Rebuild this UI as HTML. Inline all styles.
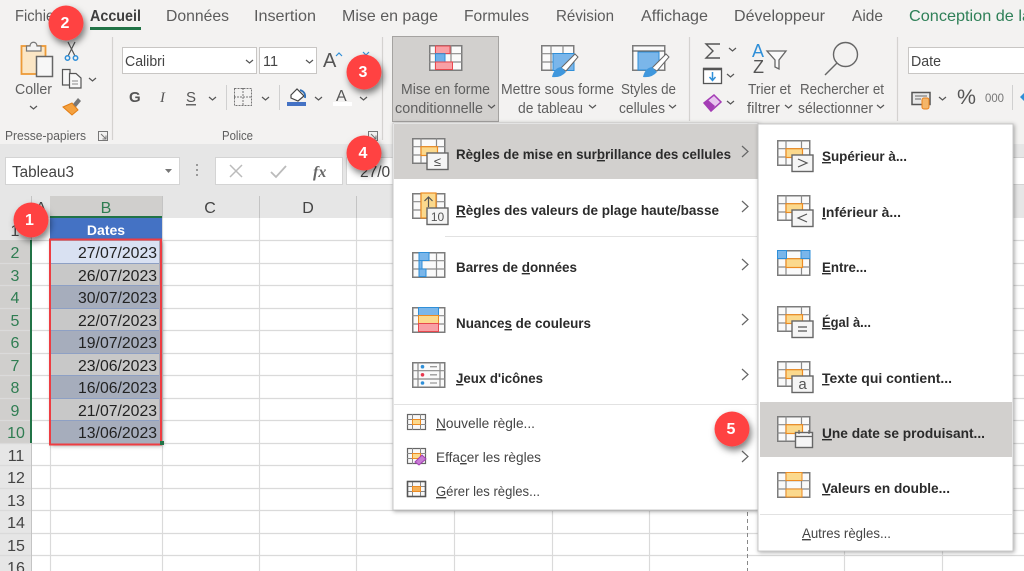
<!DOCTYPE html>
<html lang="fr">
<head>
<meta charset="utf-8">
<title>Excel</title>
<style>
html,body{margin:0;padding:0;background:#fff;width:1024px;height:571px;overflow:hidden}
svg{display:block;position:absolute;left:0;top:0;filter:blur(.3px)}
text{font-family:"Liberation Sans",sans-serif;white-space:pre}
.tab{font-size:16px;fill:#5c5c5c}
.rb{font-size:14.5px;fill:#5f5f5f}
.lb{font-size:13px;fill:#5f5f5f}
.hd{font-size:16px;fill:#444;text-anchor:middle}
.num{font-size:16px;fill:#444;text-anchor:middle}
.sel{fill:#2f7d52}
.dt{font-size:16px;fill:#222}
.m{font-size:14px;font-weight:bold;fill:#2b2b2b}
.r{font-size:14px;fill:#444}
.u{text-decoration:underline}
.c{font-size:16px;font-weight:bold;fill:#fff;text-anchor:middle}
.chev{fill:none;stroke:#555;stroke-width:1.2}
.arr{fill:none;stroke:#666;stroke-width:1.2}
.gl{stroke:#dadada;stroke-width:1.2}
</style>
</head>
<body>
<svg width="1024" height="571" viewBox="0 0 1024 571" xmlns="http://www.w3.org/2000/svg">
<defs>
<filter id="sh" x="-10%" y="-10%" width="120%" height="120%"><feDropShadow dx="1" dy="1" stdDeviation="2" flood-color="#000" flood-opacity=".35"/></filter>
<filter id="cs" x="-40%" y="-40%" width="180%" height="180%"><feDropShadow dx="2" dy="4" stdDeviation="3.500" flood-color="#000" flood-opacity=".5"/></filter>
<g id="grid">
<rect x="0.750" y="0.750" width="32" height="24.500" fill="#fafafa" stroke="#7c7c7c" stroke-width="1.500"/>
<path d="M0 8.700H33M0 17H33M9 0V25M24.500 0V25" stroke="#8a8a8a" stroke-width="1.200" fill="none"/>
</g>
<g id="gridO">
<use href="#grid"/>
<rect x="9" y="8.700" width="16.500" height="8.800" fill="#fbd98d" stroke="#ed8b22" stroke-width="1.200"/>
</g>
<g id="ov"><rect x="15" y="15" width="21" height="16.500" fill="#f5f5f5" stroke="#666" stroke-width="1.400"/></g>
<path id="ch" class="chev" d="M0 0L3.500 3L7 0"/>
<path id="ar" class="arr" d="M0 0L6 5.500L0 11"/>
<g id="small">
<rect x="0.500" y="0.500" width="18" height="15" fill="#f8f8f8" stroke="#666" stroke-width="1.200"/>
<path d="M0 5.500H19M0 10.500H19M5.500 0V16M13.500 0V16" stroke="#888" fill="none"/>
</g>
</defs>

<!-- base -->
<rect width="1024" height="571" fill="#fff"/>
<rect width="1024" height="145" fill="#f3f2f1"/>
<rect y="144" width="1024" height="52" fill="#e6e6e6"/>

<!-- tabs -->
<text class="tab" x="15" y="21" textLength="44" lengthAdjust="spacingAndGlyphs">Fichier</text>
<text class="tab" x="90" y="21" textLength="51" lengthAdjust="spacingAndGlyphs" style="font-weight:bold;fill:#3f3f3f">Accueil</text>
<rect x="90" y="27" width="51" height="3" fill="#217346"/>
<text class="tab" x="166" y="21" textLength="63" lengthAdjust="spacingAndGlyphs">Données</text>
<text class="tab" x="254" y="21" textLength="62" lengthAdjust="spacingAndGlyphs">Insertion</text>
<text class="tab" x="342" y="21" textLength="96" lengthAdjust="spacingAndGlyphs">Mise en page</text>
<text class="tab" x="464" y="21" textLength="65" lengthAdjust="spacingAndGlyphs">Formules</text>
<text class="tab" x="556" y="21" textLength="58" lengthAdjust="spacingAndGlyphs">Révision</text>
<text class="tab" x="641" y="21" textLength="67" lengthAdjust="spacingAndGlyphs">Affichage</text>
<text class="tab" x="734" y="21" textLength="91" lengthAdjust="spacingAndGlyphs">Développeur</text>
<text class="tab" x="852" y="21" textLength="31" lengthAdjust="spacingAndGlyphs">Aide</text>
<text class="tab" x="909" y="21" textLength="122" lengthAdjust="spacingAndGlyphs" style="fill:#2f8058">Conception de la</text>

<!-- ribbon separators -->
<path d="M112.500 37V140M382.500 37V140M689.500 37V121M897.500 37V121" stroke="#d4d2d0" stroke-width="1.200"/>

<!-- clipboard group -->
<rect x="21.500" y="46" width="24" height="28" fill="#fbe6c5" stroke="#ed9a37" stroke-width="1.800"/>
<path d="M26.500 51V46H30C30 41 37 41 37 46H41V51Z" fill="#f3f3f3" stroke="#777" stroke-width="1.200"/>
<rect x="36.500" y="56.500" width="16" height="20" fill="#f7f7f7" stroke="#666" stroke-width="1.500"/>
<text class="rb" x="15" y="94" textLength="37" lengthAdjust="spacingAndGlyphs">Coller</text>
<use href="#ch" x="30" y="106"/>
<path d="M68 42L75 56M75 42L68 56" stroke="#555" stroke-width="1.200"/>
<circle cx="67.500" cy="58" r="2.200" fill="none" stroke="#2f8fd8" stroke-width="1.500"/>
<circle cx="75.500" cy="58" r="2.200" fill="none" stroke="#2f8fd8" stroke-width="1.500"/>
<path d="M62.500 69.500H70V85H62.500Z" fill="#f7f7f7" stroke="#555" stroke-width="1.200"/>
<path d="M69.500 73.500H76L81 78V88H69.500Z" fill="#f7f7f7" stroke="#555" stroke-width="1.200"/>
<path d="M72 81H78M72 84H78" stroke="#888"/>
<use href="#ch" x="89" y="78"/>
<path d="M63 107L72 103L78 110L72 115Z" fill="#f4a13f" stroke="#e27d14"/>
<path d="M73 104L78 98L81 101L76 107Z" fill="#777"/>

<!-- font group -->
<rect x="122.500" y="47.500" width="134" height="26" fill="#fff" stroke="#c8c6c4"/>
<text class="rb" x="125" y="66" textLength="40" lengthAdjust="spacingAndGlyphs" style="fill:#444">Calibri</text>
<use href="#ch" x="246" y="60"/>
<rect x="259.500" y="47.500" width="57" height="26" fill="#fff" stroke="#c8c6c4"/>
<text class="rb" x="263" y="66" style="fill:#444">11</text>
<use href="#ch" x="306" y="60"/>
<text x="323" y="67" style="font-size:20px;fill:#555">A</text>
<path d="M336 56L339 53L342 56" fill="none" stroke="#2f8fd8" stroke-width="1.200"/>
<path d="M363 52L366 55L369 52" fill="none" stroke="#2f8fd8" stroke-width="1.200"/>
<text x="129" y="102" style="font-size:15px;font-weight:bold;fill:#555">G</text>
<text x="160" y="102" style="font-size:15px;font-style:italic;fill:#555;font-family:'Liberation Serif',serif">I</text>
<text x="186" y="102" style="font-size:15px;fill:#555">S</text>
<rect x="186" y="104" width="10" height="1.500" fill="#666"/>
<use href="#ch" x="209" y="97"/>
<path d="M226.500 85V110M279.500 85V110" stroke="#d0d0d0"/>
<rect x="234.500" y="88.500" width="17" height="17" fill="none" stroke="#777" stroke-dasharray="2 1"/>
<path d="M243 88V106M234 97H252" stroke="#777" stroke-dasharray="2 1"/>
<use href="#ch" x="262" y="97"/>
<path d="M291 95L297 89L304 96L298 101L291 98Z" fill="#fff" stroke="#444" stroke-width="1.200"/>
<path d="M300 90Q306 92 305 98" fill="none" stroke="#2f6fb8" stroke-width="1.800"/>
<rect x="287" y="102" width="19" height="4" fill="#4472c4"/>
<use href="#ch" x="315" y="97"/>
<text x="336" y="101" style="font-size:16px;fill:#555">A</text>
<rect x="333" y="102" width="19" height="4" fill="#fff"/>
<use href="#ch" x="360" y="97"/>
<text class="lb" x="5" y="140" textLength="81" lengthAdjust="spacingAndGlyphs">Presse-papiers</text>
<text class="lb" x="222" y="140" textLength="31" lengthAdjust="spacingAndGlyphs">Police</text>
<path d="M98.500 131.500H107.500V140.500H98.500ZM101 134L106 139M106 135.500V139H102.500" fill="none" stroke="#777"/>
<path d="M368.500 131.500H377.500V140.500H368.500ZM371 134L376 139M376 135.500V139H372.500" fill="none" stroke="#777"/>

<!-- CF button -->
<rect x="392.500" y="36.500" width="106" height="85" fill="#d2d0ce" stroke="#a5a3a1"/>
<g transform="translate(429 45)">
<rect x="0.750" y="0.750" width="32" height="24.500" fill="#fafafa" stroke="#7c7c7c" stroke-width="1.500"/>
<path d="M0 8.700H33M0 17H33M6.500 0V25M22 0V25" stroke="#8a8a8a" stroke-width="1.200"/>
<rect x="6.500" y="1" width="14.500" height="7.500" fill="#f8a0a5" stroke="#e8484f"/>
<rect x="6.500" y="8.700" width="9.500" height="8.300" fill="#70b0e8" stroke="#2f8fd8"/>
<rect x="6.500" y="17" width="17" height="7.500" fill="#f8a0a5" stroke="#e8484f"/>
</g>
<text class="rb" x="401" y="94" textLength="89" lengthAdjust="spacingAndGlyphs">Mise en forme</text>
<text class="rb" x="395" y="113" textLength="88" lengthAdjust="spacingAndGlyphs">conditionnelle</text>
<use href="#ch" x="488" y="105"/>

<!-- table format -->
<g transform="translate(541 45)">
<rect x="0.750" y="0.750" width="32" height="24.500" fill="#fafafa" stroke="#7c7c7c" stroke-width="1.500"/>
<path d="M0 8.700H33M0 17H33M10 0V25M22 0V25" stroke="#8a8a8a" stroke-width="1.200"/>
<rect x="12" y="8.500" width="21" height="17" fill="#7ab6ea" stroke="#2f8fd8"/>
</g>
<path d="M561 68L575 54L578 57L566 71Z" fill="#fff" stroke="#666"/>
<path d="M552 77Q554 68 561 67L566 72Q561 78 552 77Z" fill="#3f97dd"/>
<text class="rb" x="501" y="94" textLength="113" lengthAdjust="spacingAndGlyphs">Mettre sous forme</text>
<text class="rb" x="518" y="113" textLength="65" lengthAdjust="spacingAndGlyphs">de tableau</text>
<use href="#ch" x="589" y="105"/>

<!-- cell styles -->
<g transform="translate(632 45)">
<rect x="0.750" y="0.750" width="32" height="24.500" fill="#fafafa" stroke="#7c7c7c" stroke-width="1.500"/>
<rect x="6" y="7" width="21" height="18" fill="#7ab6ea" stroke="#2f8fd8"/>
<path d="M0 6H33" stroke="#666" stroke-width="1.200"/>
</g>
<path d="M652 68L666 54L669 57L657 71Z" fill="#fff" stroke="#666"/>
<path d="M643 77Q645 68 652 67L657 72Q652 78 643 77Z" fill="#3f97dd"/>
<text class="rb" x="621" y="94" textLength="55" lengthAdjust="spacingAndGlyphs">Styles de</text>
<text class="rb" x="619" y="113" textLength="46" lengthAdjust="spacingAndGlyphs">cellules</text>
<use href="#ch" x="669" y="105"/>

<!-- editing -->
<path d="M720 44H706L713 51L706 58H720" fill="none" stroke="#555" stroke-width="1.400"/>
<use href="#ch" x="729" y="48"/>
<rect x="703.500" y="68.500" width="18" height="15" fill="#fff" stroke="#555" stroke-width="1.300"/>
<path d="M703 69H722" stroke="#555" stroke-width="2.500"/>
<path d="M712.500 72V80M709.500 77L712.500 80.500L715.500 77" fill="none" stroke="#2f8fd8" stroke-width="1.500"/>
<use href="#ch" x="727" y="74"/>
<path d="M704 103L714 95L721 102L711 111Z" fill="#e8c6ef" stroke="#a43db5" stroke-width="1.500"/>
<path d="M704 103L708 100L715 106L711 111Z" fill="#a43db5"/>
<use href="#ch" x="727" y="101"/>
<text x="752" y="57" style="font-size:18px;fill:#2f8fd8">A</text>
<text x="753" y="73" style="font-size:18px;fill:#555">Z</text>
<path d="M767 51H786L779 60V69L775 67V60Z" fill="#fafafa" stroke="#666" stroke-width="1.300"/>
<text class="rb" x="748" y="94" textLength="43" lengthAdjust="spacingAndGlyphs">Trier et</text>
<text class="rb" x="747" y="113" textLength="33" lengthAdjust="spacingAndGlyphs">filtrer</text>
<use href="#ch" x="785" y="105"/>
<circle cx="845.500" cy="54.500" r="12" fill="none" stroke="#666" stroke-width="1.400"/>
<path d="M837 63L825 75" stroke="#666" stroke-width="1.400"/>
<text class="rb" x="800" y="94" textLength="84" lengthAdjust="spacingAndGlyphs">Rechercher et</text>
<text class="rb" x="798" y="113" textLength="75" lengthAdjust="spacingAndGlyphs">sélectionner</text>
<use href="#ch" x="877" y="105"/>

<!-- number -->
<rect x="908.500" y="47.500" width="120" height="26" fill="#fff" stroke="#c8c6c4"/>
<text class="rb" x="911" y="66" textLength="30" lengthAdjust="spacingAndGlyphs" style="fill:#444">Date</text>
<rect x="912" y="92.500" width="18" height="12" fill="#e8e8e8" stroke="#555" stroke-width="1.500"/>
<path d="M915 96H927M915 99H921" stroke="#666"/>
<rect x="922" y="98" width="7" height="11" rx="2" fill="#f4b66a" stroke="#e8801a"/>
<use href="#ch" x="939" y="97"/>
<text x="957" y="104" style="font-size:21px;fill:#555" textLength="19" lengthAdjust="spacingAndGlyphs">%</text>
<text x="985" y="102" style="font-size:12px;fill:#777" textLength="19" lengthAdjust="spacingAndGlyphs">000</text>
<path d="M1012.500 85V110" stroke="#d0d0d0"/>
<path d="M1020 97L1024 93V101Z" fill="#2f8fd8"/>

<!-- formula bar -->
<rect x="5.500" y="157.500" width="174" height="27" fill="#fff" stroke="#d4d4d4"/>
<text x="12" y="177" style="font-size:15.500px;fill:#444" textLength="62" lengthAdjust="spacingAndGlyphs">Tableau3</text>
<path d="M165 169H172L168.500 173Z" fill="#777"/>
<path d="M197 164V166M197 169V171M197 174V176" stroke="#999" stroke-width="2"/>
<rect x="215.500" y="157.500" width="127" height="27" fill="#fff" stroke="#d4d4d4"/>
<path d="M230 165L242 177M242 165L230 177" stroke="#bbb" stroke-width="1.500"/>
<path d="M271 172L276 177L286 166" fill="none" stroke="#bbb" stroke-width="1.800"/>
<text x="313" y="177" style="font-size:16px;font-style:italic;font-weight:bold;fill:#666;font-family:'Liberation Serif',serif">fx</text>
<rect x="346.500" y="157.500" width="700" height="27" fill="#fff" stroke="#d4d4d4"/>
<text x="360" y="177" style="font-size:15.500px;fill:#444">27/0</text>

<!-- column header -->
<rect y="196" width="1024" height="22" fill="#e6e6e6"/>
<rect x="50" y="196" width="112" height="22" fill="#d0cfcd"/>
<rect x="50" y="216" width="112" height="2" fill="#217346"/>
<path d="M31.500 196V218M162.500 196V218M259.500 196V218M356.500 196V218" stroke="#c4c4c4"/>
<text class="hd" x="106" y="213" style="fill:#2f7d52">B</text>
<text class="hd" x="210" y="213">C</text>
<text class="hd" x="308" y="213">D</text>
<text class="hd" x="41" y="213">A</text>

<!-- row header -->
<rect y="218" width="31" height="353" fill="#e6e6e6"/>
<rect y="240" width="31" height="203" fill="#d0cfcd"/>
<g class="gl">
<path d="M31 240.500H1024M0 263.500H1024M0 285.500H1024M0 308.500H1024M0 330.500H1024M0 353.500H1024M0 375.500H1024M0 398.500H1024M0 420.500H1024M0 443.500H1024M0 465.500H1024M0 488.500H1024M0 510.500H1024M0 533.500H1024M0 555.500H1024"/>
<path d="M50.500 218V571M162.500 218V571M259.500 218V571M356.500 218V571M454.500 218V571M552.500 218V571M649.500 218V571M844.500 218V571M942.500 218V571M1039.500 218V571"/>
</g>
<path d="M747.500 218V571" stroke="#888" stroke-dasharray="4 3"/>
<path d="M31.500 218V571" stroke="#c4c4c4"/>
<text class="num" x="15" y="236">1</text>
<text class="num sel" x="15" y="258">2</text>
<text class="num sel" x="15" y="281">3</text>
<text class="num sel" x="15" y="303">4</text>
<text class="num sel" x="15" y="326">5</text>
<text class="num sel" x="15" y="348">6</text>
<text class="num sel" x="15" y="371">7</text>
<text class="num sel" x="15" y="393">8</text>
<text class="num sel" x="15" y="416">9</text>
<text class="num sel" x="16" y="438">10</text>
<text class="num" x="16" y="461">11</text>
<text class="num" x="16" y="483">12</text>
<text class="num" x="16" y="506">13</text>
<text class="num" x="16" y="528">14</text>
<text class="num" x="16" y="551">15</text>
<text class="num" x="16" y="573">16</text>
<rect x="30" y="240" width="2" height="203" fill="#217346"/>

<!-- data -->
<rect x="50" y="218" width="112" height="22" fill="#4472c4"/>
<text x="106" y="235" text-anchor="middle" style="font-size:14px;font-weight:bold;fill:#fff">Dates</text>
<rect x="50" y="240" width="112" height="205" fill="#a6adbc" filter="url(#sh)"/>
<rect x="51" y="241" width="108" height="22" fill="#d9e1f2"/>
<rect x="51" y="264" width="108" height="21" fill="#c8c8c8"/>
<rect x="51" y="286" width="108" height="22" fill="#a6adbc"/>
<rect x="51" y="309" width="108" height="21" fill="#c8c8c8"/>
<rect x="51" y="331" width="108" height="22" fill="#a6adbc"/>
<rect x="51" y="354" width="108" height="21" fill="#c8c8c8"/>
<rect x="51" y="376" width="108" height="22" fill="#a6adbc"/>
<rect x="51" y="399" width="108" height="21" fill="#c8c8c8"/>
<rect x="51" y="421" width="108" height="22" fill="#a6adbc"/>
<path d="M51 263.500H159M51 285.500H159M51 308.500H159M51 330.500H159M51 353.500H159M51 375.500H159M51 398.500H159M51 420.500H159" stroke="#8ea0c4"/>
<text class="dt" x="78" y="258" textLength="79" lengthAdjust="spacingAndGlyphs">27/07/2023</text>
<text class="dt" x="78" y="281" textLength="79" lengthAdjust="spacingAndGlyphs">26/07/2023</text>
<text class="dt" x="78" y="303" textLength="79" lengthAdjust="spacingAndGlyphs">30/07/2023</text>
<text class="dt" x="78" y="326" textLength="79" lengthAdjust="spacingAndGlyphs">22/07/2023</text>
<text class="dt" x="78" y="348" textLength="79" lengthAdjust="spacingAndGlyphs">19/07/2023</text>
<text class="dt" x="78" y="371" textLength="79" lengthAdjust="spacingAndGlyphs">23/06/2023</text>
<text class="dt" x="78" y="393" textLength="79" lengthAdjust="spacingAndGlyphs">16/06/2023</text>
<text class="dt" x="78" y="416" textLength="79" lengthAdjust="spacingAndGlyphs">21/07/2023</text>
<text class="dt" x="78" y="438" textLength="79" lengthAdjust="spacingAndGlyphs">13/06/2023</text>
<rect x="50" y="239.500" width="111" height="205" fill="none" stroke="#ee3d42" stroke-width="2"/>
<rect x="160" y="441" width="4" height="4" fill="#217346"/>

<!-- main menu -->
<rect x="393" y="123" width="365" height="387" fill="#fff" stroke="#c8c8c8" filter="url(#sh)"/>
<rect x="394" y="124" width="364" height="55" fill="#d2d0ce"/>
<path d="M445 236.500H757M394 404.500H757" stroke="#e2e2e2"/>

<g transform="translate(412 138)"><use href="#gridO"/><use href="#ov"/><text x="25.500" y="28" text-anchor="middle" style="font-size:13px;fill:#444">≤</text></g>
<text class="m" x="456" y="159" textLength="275" lengthAdjust="spacingAndGlyphs">Règles de mise en sur<tspan class="u">b</tspan>rillance des cellules</text>
<use href="#ar" x="742" y="146"/>

<g transform="translate(412 193)">
<rect x="0.750" y="0.750" width="32" height="24.500" fill="#fafafa" stroke="#7c7c7c" stroke-width="1.500"/>
<path d="M0 8.700H33M0 17H33M9 0V25M24.500 0V25" stroke="#8a8a8a" stroke-width="1.200"/>
<rect x="9" y="0" width="15" height="25" fill="#fbd98d" stroke="#ed8b22" stroke-width="1.200"/>
<path d="M16.500 14V4M12.500 8L16.500 4L20.500 8" fill="none" stroke="#555" stroke-width="1.200"/>
<use href="#ov"/><text x="25.500" y="28" text-anchor="middle" style="font-size:12px;fill:#555">10</text></g>
<text class="m" x="456" y="215" textLength="263" lengthAdjust="spacingAndGlyphs"><tspan class="u">R</tspan>ègles des valeurs de plage haute/basse</text>
<use href="#ar" x="742" y="201"/>

<g transform="translate(412 252)"><use href="#grid"/>
<rect x="7" y="0.500" width="10" height="8" fill="#7ab6ea" stroke="#2f8fd8"/>
<rect x="7" y="8.500" width="3" height="8.500" fill="#7ab6ea" stroke="#2f8fd8"/>
<rect x="7" y="17" width="7" height="7.500" fill="#7ab6ea" stroke="#2f8fd8"/></g>
<text class="m" x="456" y="272" textLength="121" lengthAdjust="spacingAndGlyphs">Barres de <tspan class="u">d</tspan>onnées</text>
<use href="#ar" x="742" y="259"/>

<g transform="translate(412 307)"><use href="#grid"/>
<rect x="6.500" y="0.500" width="20" height="8" fill="#7ab6ea" stroke="#2f8fd8"/>
<rect x="6.500" y="8.500" width="20" height="8" fill="#fbd98d" stroke="#ed8b22"/>
<rect x="6.500" y="16.500" width="20" height="8" fill="#f8a0a5" stroke="#e8484f"/></g>
<text class="m" x="456" y="328" textLength="135" lengthAdjust="spacingAndGlyphs">Nuance<tspan class="u">s</tspan> de couleurs</text>
<use href="#ar" x="742" y="314"/>

<g transform="translate(412 362)">
<rect x="0.750" y="0.750" width="32" height="24.500" fill="#fafafa" stroke="#7c7c7c" stroke-width="1.500"/>
<path d="M0 8.700H33M0 17H33M6 0V25M28 0V25" stroke="#8a8a8a" stroke-width="1.200"/>
<circle cx="10.500" cy="4.700" r="1.800" fill="#2f8fd8"/><circle cx="10.500" cy="12.800" r="1.800" fill="#e8384f"/><circle cx="10.500" cy="21" r="1.800" fill="#2f8fd8"/>
<path d="M18 4.700H25M18 12.800H25M18 21H25" stroke="#999" stroke-width="1.300"/></g>
<text class="m" x="456" y="383" textLength="87" lengthAdjust="spacingAndGlyphs"><tspan class="u">J</tspan>eux d'icônes</text>
<use href="#ar" x="742" y="369"/>

<g transform="translate(407 414)"><use href="#small"/><rect x="5.500" y="5.500" width="8" height="5" fill="#fbd98d" stroke="#ed8b22"/></g>
<text class="r" x="436" y="428" textLength="99" lengthAdjust="spacingAndGlyphs"><tspan class="u">N</tspan>ouvelle règle...</text>
<g transform="translate(407 448)"><use href="#small"/><rect x="5.500" y="5.500" width="8" height="5" fill="#fbd98d" stroke="#ed8b22"/><path d="M8 14L15 7L19 11L12 17Z" fill="#c77dd3" stroke="#a43db5"/></g>
<text class="r" x="436" y="462" textLength="105" lengthAdjust="spacingAndGlyphs">Effa<tspan class="u">c</tspan>er les règles</text>
<use href="#ar" x="742" y="451"/>
<g transform="translate(407 481)"><use href="#small"/><rect x="0.500" y="0.500" width="18" height="15" fill="none" stroke="#555" stroke-width="1.500"/><rect x="5.500" y="5.500" width="8" height="5" fill="#f5b057" stroke="#ed8b22"/></g>
<text class="r" x="436" y="496" textLength="104" lengthAdjust="spacingAndGlyphs"><tspan class="u">G</tspan>érer les règles...</text>

<!-- submenu -->
<rect x="758" y="124" width="255" height="427" fill="#fff" stroke="#c8c8c8" filter="url(#sh)"/>
<rect x="760" y="402" width="252" height="55" fill="#d2d0ce"/>
<path d="M760 514.500H1012" stroke="#e2e2e2"/>

<g transform="translate(777 140)"><use href="#gridO"/><use href="#ov"/><path d="M21 19L30 23L21 27" fill="none" stroke="#555" stroke-width="1.200"/></g>
<text class="m" x="822" y="161" textLength="85" lengthAdjust="spacingAndGlyphs"><tspan class="u">S</tspan>upérieur à...</text>
<g transform="translate(777 195)"><use href="#gridO"/><use href="#ov"/><path d="M30 19L21 23L30 27" fill="none" stroke="#555" stroke-width="1.200"/></g>
<text class="m" x="822" y="217" textLength="79" lengthAdjust="spacingAndGlyphs"><tspan class="u">I</tspan>nférieur à...</text>
<g transform="translate(777 250)"><use href="#gridO"/><rect x="0.500" y="0.500" width="9" height="8" fill="#7ab6ea" stroke="#2f8fd8"/><rect x="24" y="0.500" width="9" height="8" fill="#7ab6ea" stroke="#2f8fd8"/></g>
<text class="m" x="822" y="272" textLength="45" lengthAdjust="spacingAndGlyphs"><tspan class="u">E</tspan>ntre...</text>
<g transform="translate(777 306)"><use href="#gridO"/><use href="#ov"/><path d="M21 21H30M21 25H30" stroke="#555" stroke-width="1.200"/></g>
<text class="m" x="822" y="327" textLength="49" lengthAdjust="spacingAndGlyphs"><tspan class="u">É</tspan>gal à...</text>
<g transform="translate(777 361)"><use href="#gridO"/><use href="#ov"/><text x="25.500" y="28" text-anchor="middle" style="font-size:15px;fill:#555">a</text></g>
<text class="m" x="822" y="383" textLength="130" lengthAdjust="spacingAndGlyphs"><tspan class="u">T</tspan>exte qui contient...</text>
<g transform="translate(777 416)"><use href="#gridO"/><rect x="18.500" y="16.500" width="17" height="15" fill="#f5f5f5" stroke="#666" stroke-width="1.400"/><path d="M18 20.500H36M22 14V18M32 14V18" stroke="#666" stroke-width="1.200"/></g>
<text class="m" x="822" y="438" textLength="163" lengthAdjust="spacingAndGlyphs"><tspan class="u">U</tspan>ne date se produisant...</text>
<g transform="translate(777 472)"><use href="#grid"/><rect x="9" y="0.500" width="16" height="8" fill="#fbd98d" stroke="#ed8b22"/><rect x="9" y="17" width="16" height="8" fill="#fbd98d" stroke="#ed8b22"/></g>
<text class="m" x="822" y="493" textLength="128" lengthAdjust="spacingAndGlyphs"><tspan class="u">V</tspan>aleurs en double...</text>
<text class="r" x="802" y="538" textLength="89" lengthAdjust="spacingAndGlyphs"><tspan class="u">A</tspan>utres règles...</text>

<!-- callouts -->
<circle cx="31" cy="220" r="17.500" fill="#ff4343" filter="url(#cs)"/><text class="c" x="29.500" y="225">1</text>
<circle cx="66" cy="23" r="17.500" fill="#ff4343" filter="url(#cs)"/><text class="c" x="65" y="28">2</text>
<circle cx="364" cy="72" r="17.500" fill="#ff4343" filter="url(#cs)"/><text class="c" x="363" y="77">3</text>
<circle cx="364" cy="153" r="17.500" fill="#ff4343" filter="url(#cs)"/><text class="c" x="363" y="158">4</text>
<circle cx="732" cy="429" r="17.500" fill="#ff4343" filter="url(#cs)"/><text class="c" x="731" y="434">5</text>
</svg>
</body>
</html>
